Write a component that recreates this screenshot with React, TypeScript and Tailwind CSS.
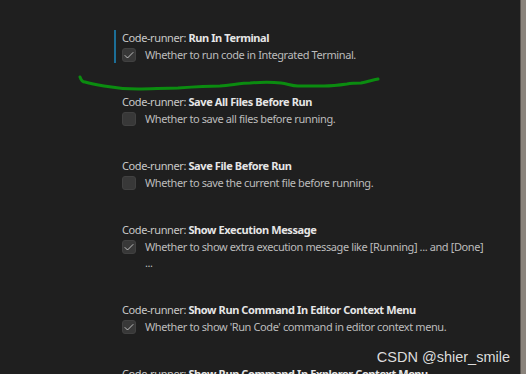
import { Check } from 'lucide-react';

type Setting = {
  name: string;
  desc: string;
  checked: boolean;
  focused?: boolean;
};

const settings: Setting[] = [
  { name: 'Run In Terminal', desc: 'Whether to run code in Integrated Terminal.', checked: true, focused: true },
  { name: 'Save All Files Before Run', desc: 'Whether to save all files before running.', checked: false },
  { name: 'Save File Before Run', desc: 'Whether to save the current file before running.', checked: false },
  {
    name: 'Show Execution Message',
    desc: 'Whether to show extra execution message like [Running] ... and [Done] ...',
    checked: true,
  },
  { name: 'Show Run Command In Editor Context Menu', desc: "Whether to show 'Run Code' command in editor context menu.", checked: true },
  { name: 'Show Run Command In Explorer Context Menu', desc: "Whether to show 'Run Code' command in explorer context menu.", checked: true },
];

function SettingItem({ s }: { s: Setting }) {
  return (
    <div
      className={`mb-[31px] border-l-[2px] pl-[6px] ${s.focused ? 'border-[#1c6e97]' : 'border-transparent'}`}
    >
      <div className="h-[16px] text-[11px] leading-[16px] tracking-[-0.4px] text-[#c8c8c8] whitespace-nowrap">
        Code-runner: <span className="font-bold text-[#e6e6e6]">{s.name}</span>
      </div>
      <div className="mt-[1px] flex items-start">
        <div className="mt-[1px] flex h-[14px] w-[14px] shrink-0 items-center justify-center rounded-[3px] border border-[#414141] bg-[#383838]">
          {s.checked && <Check size={13} strokeWidth={1.6} className="text-[#e0e0e0]" />}
        </div>
        <div className="ml-[9px] w-[345px] text-[11px] leading-[16px] tracking-[-0.4px] text-[#bcbcbc]">{s.desc}</div>
      </div>
    </div>
  );
}

export default function App() {
  return (
    <div
      className="relative flex h-[374px] w-[526px] overflow-hidden bg-[#1f1f1f]"
      style={{ fontFamily: '"Noto Sans", sans-serif' }}
    >
      <div className="flex-1 pl-[114px] pt-[30px]">
        {settings.map((s) => (
          <SettingItem key={s.name} s={s} />
        ))}
      </div>
      <div className="w-[6px] border-l border-[#5a5550] bg-[#8a837b]" />

      <svg
        className="pointer-events-none absolute left-0 top-0"
        width="526"
        height="374"
        viewBox="0 0 526 374"
      >
        <path
          d="M80 77 C81 80 82 82 85 82 C92 84 98 85 104 86 C115 88 126 89 138 89 C150 89 165 88 178 88 C192 87 206 86 220 86 C232 85 242 83 250 83 C262 82 272 82 281 83 C288 84 292 86 298 86 C306 86 315 86 324 86 C332 86 340 85 347 84 C352 83 356 83 361 83 C367 82 372 80 378 79"
          fill="none"
          stroke="#0b8c10"
          strokeWidth="3"
          strokeLinecap="round"
        />
      </svg>

      <div
        className="absolute right-[16px] top-[347px] text-[14.5px] leading-[20px] text-[#dcdcdc]"
        style={{ fontFamily: '"Liberation Sans", Arial, sans-serif' }}
      >
        CSDN @shier_smile
      </div>
    </div>
  );
}
